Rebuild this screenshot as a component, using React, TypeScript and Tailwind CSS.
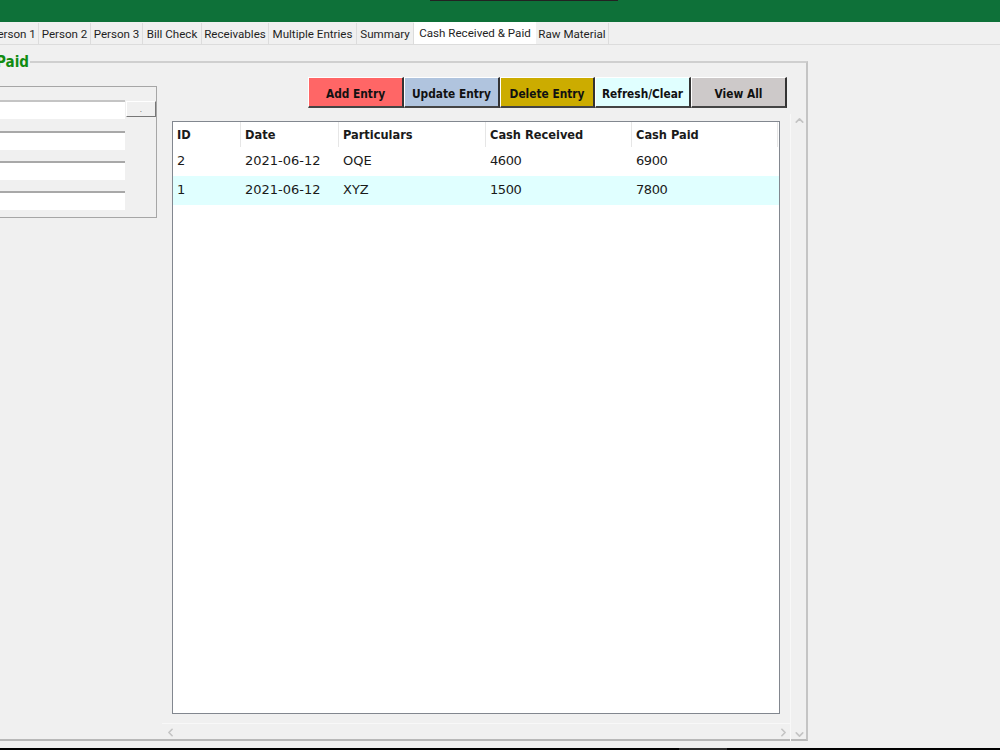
import React from 'react';
import { ChevronLeft, ChevronRight, ChevronUp, ChevronDown } from 'lucide-react';

const uiFont = { fontFamily: 'Roboto, "Open Sans", sans-serif' };
const dataFont = { fontFamily: '"DejaVu Sans", sans-serif' };

const tabs = [
  { label: 'Person 1', width: 'w-[51px]' },
  { label: 'Person 2', width: 'w-[52px]' },
  { label: 'Person 3', width: 'w-[52px]' },
  { label: 'Bill Check', width: 'w-[59px]' },
  { label: 'Receivables', width: 'w-[67px]' },
  { label: 'Multiple Entries', width: 'w-[88px]' },
  { label: 'Summary', width: 'w-[57px]' },
];

const actions = [
  { label: 'Add Entry', color: 'bg-[#ff6666]', width: 'w-[96px]' },
  { label: 'Update Entry', color: 'bg-[#b0c4de]', width: 'w-[96px]' },
  { label: 'Delete Entry', color: 'bg-[#ccac00]', width: 'w-[95px]' },
  { label: 'Refresh/Clear', color: 'bg-[#e0ffff]', width: 'w-[96px]' },
  { label: 'View All', color: 'bg-[#cdc9c9]', width: 'w-[96px]' },
];

const columns = [
  { label: 'ID', width: 'w-[68px]' },
  { label: 'Date', width: 'w-[98px]' },
  { label: 'Particulars', width: 'w-[147px]' },
  { label: 'Cash Received', width: 'w-[146px]' },
  { label: 'Cash Paid', width: 'w-[146px]' },
];

const rows = [
  { id: '2', date: '2021-06-12', particulars: 'OQE', received: '4600', paid: '6900', bg: 'bg-white' },
  { id: '1', date: '2021-06-12', particulars: 'XYZ', received: '1500', paid: '7800', bg: 'bg-[#e0ffff]' },
];

const FormField = ({ first }: { first?: boolean }) => (
  <div className={`flex items-start ${first ? 'h-[31px]' : 'h-[30px]'}`}>
    <div className={`w-[125px] bg-white border-t-2 ${first ? 'h-[19px] border-[#c4c4c4]' : 'h-[19px] border-[#a8a8a8]'}`} />
    {first && (
      <button className="ml-[1px] mt-[1px] w-[30px] h-[16px] bg-[#f0f0f0] border border-white border-r-[#777] border-b-[#777] text-[9px] leading-[12px] text-[#555]">
        .
      </button>
    )}
  </div>
);

const App = () => {
  return (
    <div className="w-[1000px] h-[750px] overflow-hidden bg-[#f0f0f0] flex flex-col" style={uiFont}>
      <div className="h-[22px] shrink-0 bg-[#0e7139]">
        <div className="ml-[430px] w-[188px] h-[1px] bg-[#222]" />
      </div>

      <div className="h-[23px] shrink-0 flex items-end border-b border-[#dcdcdc] text-[11.6px] text-[#1f1f1f] pt-[2px]">
        <div className="flex ml-[-12px] h-[21px]">
          {tabs.map((tab) => (
            <div
              key={tab.label}
              className={`${tab.width} flex items-center justify-center pt-[3px] border-r border-[#dcdcdc] whitespace-nowrap`}
            >
              {tab.label}
            </div>
          ))}
        </div>
        <div className="w-[122px] h-[22px] bg-white flex items-start pt-[3px] justify-center whitespace-nowrap">
          Cash Received &amp; Paid
        </div>
        <div className="w-[73px] h-[21px] flex items-center justify-center pt-[3px] border-r border-[#dcdcdc] whitespace-nowrap">
          Raw Material
        </div>
      </div>

      <div className="relative ml-[-12px] mt-[16px] w-[820px] h-[680px] border-2 border-l-0 border-t-[#cfcfcf] border-r-[#c4c4c4] border-b-[#b8b8b8] shrink-0">
        <span
          className="absolute left-[-12px] top-[-10px] bg-[#f0f0f0] pl-[6px] pr-[1px] text-[15px] leading-[18px] font-bold font-stretch-condensed text-[#128c12] whitespace-nowrap"
          style={dataFont}
        >
          &nbsp;&nbsp;&nbsp;Paid
        </span>

        <div className="flex items-start">
          <div className="shrink-0 w-[169px] h-[132px] mt-[23px] border border-l-0 border-[#a6a6a6] pt-[13px]">
            <div className="ml-[12px]">
              <FormField first />
              <FormField />
              <FormField />
              <FormField />
            </div>
          </div>

          <div className="shrink-0 ml-[15px] w-[608px]">
            <div
              className="flex h-[31px] mt-[14px] ml-[136px] w-[479px] font-bold font-stretch-condensed text-[11.8px] text-[#111]"
              style={dataFont}
            >
              {actions.map((action) => (
                <button
                  key={action.label}
                  className={`${action.width} ${action.color} pt-[5px] border-t border-l border-white border-r-2 border-b-2 border-r-[#333] border-b-[#444] whitespace-nowrap`}
                >
                  {action.label}
                </button>
              ))}
            </div>

            <div
              className="mt-[13px] w-[608px] h-[593px] bg-white border border-[#82878f] text-[13px] text-[#1a1a1a]"
              style={dataFont}
            >
              <div className="flex h-[25px] font-bold font-stretch-condensed text-[12.7px]">
                {columns.map((col) => (
                  <div key={col.label} className={`${col.width} pl-[4px] pt-[3px] border-r border-[#e6e6e6] whitespace-nowrap`}>
                    {col.label}
                  </div>
                ))}
              </div>
              {rows.map((row) => (
                <div key={row.id} className={`flex h-[29px] pb-[2px] items-center ${row.bg}`}>
                  <div className="w-[68px] pl-[4px]">{row.id}</div>
                  <div className="w-[98px] pl-[4px]">{row.date}</div>
                  <div className="w-[147px] pl-[4px]">{row.particulars}</div>
                  <div className="w-[146px] pl-[4px] tracking-[-0.4px]">{row.received}</div>
                  <div className="w-[146px] pl-[4px] tracking-[-0.4px]">{row.paid}</div>
                </div>
              ))}
            </div>

            <div className="flex items-center justify-between w-[628px] h-[16px] ml-[-10px] mt-[9px] pt-[2px] border-t border-[#f8f8f8] text-[#c4c4c4]">
              <ChevronLeft size={13} strokeWidth={3} className="ml-[2px]" />
              <ChevronRight size={13} strokeWidth={3} />
            </div>
          </div>

          <div className="shrink-0 ml-[10px] mt-[51px] w-[17px] h-[627px] border-l border-[#f8f8f8] flex flex-col justify-between items-center text-[#c4c4c4]">
            <ChevronUp size={13} strokeWidth={3} />
            <ChevronDown size={13} strokeWidth={3} />
          </div>
        </div>
      </div>

      <div className="mt-auto h-[2px] flex bg-black">
        <div className="ml-[679px] w-[48px] bg-[#2b2b2b]" />
      </div>
    </div>
  );
};

export default App;
